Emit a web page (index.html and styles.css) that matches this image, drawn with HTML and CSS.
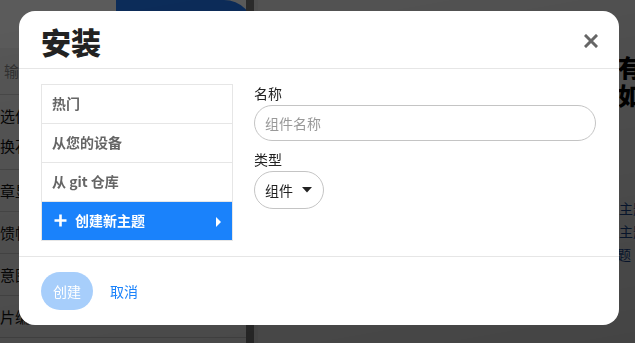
FILE: index.html
```html
<!DOCTYPE html>
<html lang="zh-CN">
<head>
<meta charset="utf-8">
<title>安装</title>
<link rel="stylesheet" href="styles.css">
</head>
<body>
<div class="page">
  <aside class="side">
    <div class="side-head"><div class="brand"></div></div>
    <div class="side-search">输入</div>
    <div class="side-item two">选使<br>换石</div>
    <div class="side-item">章显</div>
    <div class="side-item">馈帖</div>
    <div class="side-item">意图</div>
    <div class="side-item">片编</div>
  </aside>
  <div class="divider"></div>
  <main class="main">
    <h1 class="main-title">有<br>如</h1>
    <div class="links">
      <div class="link">主题</div>
      <div class="link">主题</div>
      <div class="link shift">主题</div>
    </div>
  </main>
</div>
<div class="overlay"></div>

<div class="modal">
  <header class="modal-head">
    <h2 class="modal-title">安装</h2>
    <button class="close" aria-label="关闭">
      <svg width="14" height="14" viewBox="0 0 14 14"><path d="M2 2L12 12M12 2L2 12" stroke="#666" stroke-width="3" stroke-linecap="square"/></svg>
    </button>
  </header>
  <div class="modal-body">
    <ul class="menu">
      <li class="menu-item">热门</li>
      <li class="menu-item">从您的设备</li>
      <li class="menu-item">从 git 仓库</li>
      <li class="menu-item active">
        <svg class="plus" width="13" height="13" viewBox="0 0 13 13"><path d="M6.5 0.5V12.5M0.5 6.5H12.5" stroke="#fff" stroke-width="2.6"/></svg>
        <span class="menu-label">创建新主题</span>
        <svg class="caret" width="5" height="10" viewBox="0 0 5 10"><path d="M0 0L5 5L0 10Z" fill="#fff"/></svg>
      </li>
    </ul>
    <div class="form">
      <label class="label">名称</label>
      <input class="input" type="text" placeholder="组件名称">
      <label class="label second">类型</label>
      <button class="select">组件
        <svg width="10" height="6" viewBox="0 0 10 6"><path d="M0 0H10L5 5.5Z" fill="#222"/></svg>
      </button>
    </div>
  </div>
  <footer class="modal-foot">
    <button class="btn-primary">创建</button>
    <button class="btn-link">取消</button>
  </footer>
</div>
</body>
</html>
```

FILE: styles.css
```css
* { box-sizing: border-box; }
html, body { margin: 0; height: 100%; overflow: hidden; }
body {
  font-family: "Noto Sans CJK SC", "Noto Sans", sans-serif;
  font-size: 14px;
  background: #c4c4c4;
}
.page {
  display: flex;
  height: 343px;
  width: 635px;
}
.side {
  width: 246px;
  flex: none;
  background: #d0d0d0;
  color: #111;
  font-size: 15px;
}
.side-head {
  height: 48px;
  background: #dadada;
}
.brand {
  margin-left: 116px;
  width: 138px;
  height: 30px;
  background: #1d6ad6;
  border-radius: 0 40px 0 0;
}
.side-search {
  height: 47px;
  padding: 12px 0 0 4px;
  color: #777;
  border-bottom: 1px solid #b0b0b0;
}
.side-item {
  height: 42px;
  padding: 10px 0 0 0;
  border-bottom: 1px solid #b0b0b0;
  white-space: nowrap;
  overflow: hidden;
}
.side-item.two {
  height: 75px;
  line-height: 30px;
  padding-top: 6px;
}
.divider {
  width: 12px;
  flex: none;
  background: #6a6a6a;
  border-right: 4px solid #c0c0c0;
}
.main {
  flex: 1;
  background: #c8c8c8;
  padding-top: 53px;
  white-space: nowrap;
}
.main-title {
  margin: 0 0 0 360px;
  font-size: 24px;
  line-height: 28px;
  font-weight: 900;
  color: #000;
}
.links { margin-top: 88px; margin-left: 361px; }
.link { color: #143a78; font-size: 14px; line-height: 23px; }
.link.shift { margin-left: -16px; }

.overlay {
  position: fixed;
  inset: 0;
  background: linear-gradient(170deg, rgba(0,0,0,0.58), rgba(0,0,0,0.66));
}

.modal {
  position: fixed;
  left: 19px;
  top: 11px;
  width: 600px;
  height: 314px;
  background: #fff;
  border-radius: 16px;
  display: flex;
  flex-direction: column;
}
.modal-head {
  height: 58px;
  flex: none;
  display: flex;
  align-items: center;
  justify-content: space-between;
  padding: 0 21px 0 22px;
  border-bottom: 1px solid #e6e6e6;
}
.modal-title {
  margin: 0;
  font-size: 30px;
  font-weight: 900;
  color: #222;
  line-height: 1;
  padding-top: 2px;
}
.close {
  border: 0;
  background: none;
  padding: 0;
  width: 14px;
  height: 14px;
  display: flex;
  margin-top: 2px;
}
.modal-body {
  height: 188px;
  flex: none;
  display: flex;
  gap: 21px;
  padding: 15px 23px 0 22px;
  border-bottom: 1px solid #e6e6e6;
}
.menu {
  list-style: none;
  margin: 0;
  padding: 0;
  width: 192px;
  height: 157px;
  flex: none;
  border: 1px solid #e6e6e6;
}
.menu-item {
  height: 39px;
  display: flex;
  align-items: center;
  padding: 0 10px 3px;
  font-weight: 700;
  color: #666;
  border-bottom: 1px solid #e6e6e6;
}
.menu-item.active {
  background: #1a82fb;
  color: #fff;
  border-bottom: 0;
  height: 38px;
  padding: 0 11px 2px 12px;
}
.plus { flex: none; }
.menu-label { margin-left: 8px; flex: 1; }
.caret { flex: none; margin-top: 3px; }
.form {
  flex: 1;
  display: flex;
  flex-direction: column;
  align-items: flex-start;
}
.label {
  font-size: 14px;
  color: #222;
  line-height: 20px;
  margin-top: -1px;
  margin-bottom: 2px;
}
.label.second { margin-top: 8px; margin-bottom: 2px; }
.input {
  width: 100%;
  height: 36px;
  border: 1px solid #c4c4c4;
  border-radius: 18px;
  padding: 0 10px;
  font: inherit;
  font-size: 14px;
  color: #222;
  outline: none;
}
.input::placeholder { color: #999; }
.select {
  height: 38px;
  border: 1px solid #c4c4c4;
  border-radius: 19px;
  background: #fff;
  padding: 0 11px 0 10px;
  font: inherit;
  font-size: 14px;
  color: #222;
  display: flex;
  align-items: center;
  gap: 9px;
}
.modal-foot {
  flex: 1;
  display: flex;
  align-items: center;
  gap: 17px;
  padding: 0 22px;
}
.btn-primary {
  height: 38px;
  width: 52px;
  border: 0;
  border-radius: 19px;
  background: #a7cefb;
  color: #fff;
  font: inherit;
  font-size: 14px;
  padding: 0;
}
.btn-link {
  border: 0;
  background: none;
  padding: 0;
  font: inherit;
  font-size: 14px;
  color: #1a82fb;
}
```
